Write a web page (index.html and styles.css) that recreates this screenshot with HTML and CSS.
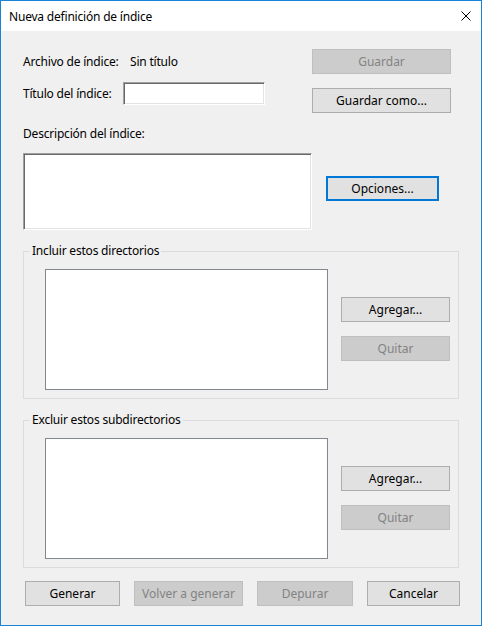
FILE: index.html
```html
<!DOCTYPE html>
<html lang="es">
<head>
    <meta charset="UTF-8">
    <title>Nueva definición de índice</title>
    <link rel="stylesheet" href="styles.css">
</head>
<body>
    <div class="dialog">
        <div class="titlebar">
            <span class="title">Nueva definición de índice</span>
            <svg class="close" width="10" height="10" viewBox="0 0 10 10">
                <path d="M0.5 0.5 L9.5 9.5 M9.5 0.5 L0.5 9.5" stroke="#000" stroke-width="1" fill="none"/>
            </svg>
        </div>

        <div class="content">
            <div class="top">
                <div class="top-left">
                    <div class="file-row">
                        <span class="file-label">Archivo de índice:</span>
                        <span>Sin título</span>
                    </div>
                    <div class="title-row">
                        <label for="index-title">Título del índice:</label>
                        <input type="text" id="index-title" class="field">
                    </div>
                    <div class="desc-label">Descripción del índice:</div>
                    <textarea class="desc"></textarea>
                </div>
                <div class="top-right">
                    <button class="btn btn-wide" disabled>Guardar</button>
                    <button class="btn btn-wide save-as">Guardar como...</button>
                    <button class="btn btn-default">Opciones...</button>
                </div>
            </div>

            <fieldset class="group">
                <legend>Incluir estos directorios</legend>
                <div class="group-body">
                    <div class="listbox"></div>
                    <div class="group-buttons">
                        <button class="btn btn-side">Agregar...</button>
                        <button class="btn btn-side" disabled>Quitar</button>
                    </div>
                </div>
            </fieldset>

            <fieldset class="group group-second">
                <legend>Excluir estos subdirectorios</legend>
                <div class="group-body">
                    <div class="listbox"></div>
                    <div class="group-buttons">
                        <button class="btn btn-side">Agregar...</button>
                        <button class="btn btn-side" disabled>Quitar</button>
                    </div>
                </div>
            </fieldset>

            <div class="footer">
                <button class="btn btn-generate">Generar</button>
                <button class="btn btn-rebuild" disabled>Volver a generar</button>
                <button class="btn btn-purge" disabled>Depurar</button>
                <button class="btn btn-cancel">Cancelar</button>
            </div>
        </div>
    </div>
</body>
</html>
```

FILE: styles.css
```css
/* Dialogo estilo Windows */
* {
    box-sizing: border-box;
}
body {
    margin: 0;
    font-family: "Noto Sans", "Open Sans", sans-serif;
    font-size: 12px;
    letter-spacing: -0.2px;
    color: #000;
}
.dialog {
    width: 482px;
    height: 626px;
    border: 1px solid #1883d7;
    background: #f0f0f0;
}
.titlebar {
    height: 30px;
    background: #fff;
    display: flex;
    align-items: center;
    justify-content: space-between;
    padding: 0 10px 0 8px;
}
.title {
    font-size: 12px;
}
.content {
    padding: 18px 0 0 22px;
}
.top {
    display: flex;
}
.top-left {
    width: 289px;
}
.file-row {
    height: 25px;
    display: flex;
    align-items: center;
}
.file-label {
    width: 107px;
}
.title-row {
    margin-top: 8px;
    height: 23px;
    display: flex;
    align-items: center;
}
.title-row label {
    width: 100px;
}
.field, .desc {
    border: 1px solid;
    border-color: #a0a0a0 #fff #fff #a0a0a0;
    box-shadow: inset 1px 1px 0 #696969, inset -1px -1px 0 #e3e3e3;
    background: #fff;
    outline: none;
    margin: 0;
    padding: 2px 4px;
    font: inherit;
}
.field {
    width: 142px;
    height: 23px;
}
.desc-label {
    margin-top: 21px;
    line-height: 16px;
}
.desc {
    display: block;
    margin-top: 11px;
    width: 289px;
    height: 77px;
    resize: none;
}
.top-right {
    display: flex;
    flex-direction: column;
    align-items: flex-start;
}
.btn {
    height: 25px;
    padding: 0;
    margin: 0;
    font: inherit;
    color: #000;
    background: #e1e1e1;
    border: 1px solid #adadad;
}
.btn:disabled {
    background: #cccccc;
    border-color: #bfbfbf;
    color: #838383;
}
.btn-wide {
    width: 139px;
}
.save-as {
    margin-top: 14px;
}
.btn-default {
    width: 113px;
    margin: 63px 0 0 14px;
    border: 2px solid #0078d7;
}
.group {
    width: 436px;
    margin: 13px 0 0 0;
    padding: 0 8px 8px 6px;
    border: 1px solid #dcdcdc;
}
.group legend {
    padding: 0 2px;
    line-height: 16px;
}
.group-second {
    margin-top: 13px;
}
.group-body {
    display: flex;
    padding: 10px 0 0 15px;
}
.listbox {
    width: 283px;
    height: 121px;
    background: #fff;
    border: 1px solid #828790;
}
.group-buttons {
    display: flex;
    flex-direction: column;
    gap: 14px;
    margin: 28px 0 0 13px;
}
.btn-side {
    width: 109px;
}
.footer {
    display: flex;
    gap: 14px;
    margin: 13px 0 0 2px;
}
.btn-generate {
    width: 95px;
}
.btn-rebuild {
    width: 109px;
}
.btn-purge {
    width: 96px;
}
.btn-cancel {
    width: 93px;
}
```
